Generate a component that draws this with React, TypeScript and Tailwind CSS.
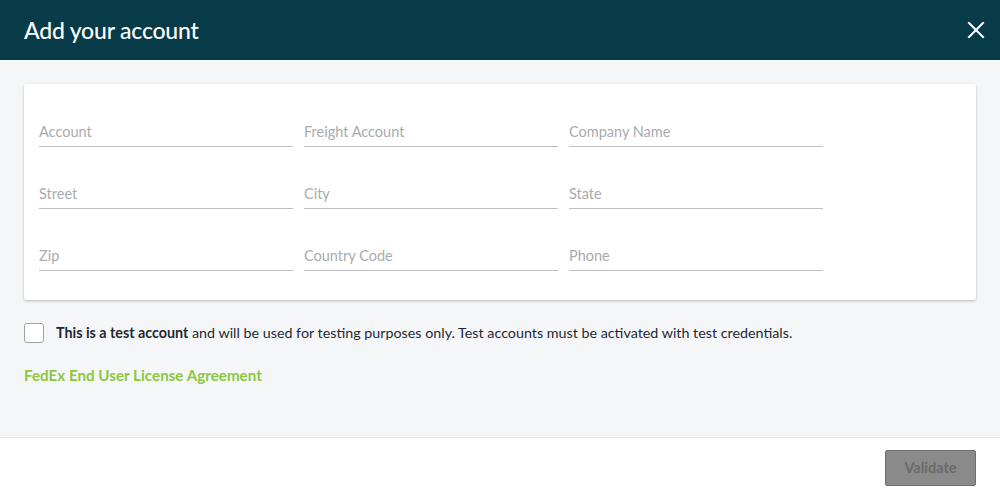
import React from "react";

const fields = [
  ["Account", "Freight Account", "Company Name"],
  ["Street", "City", "State"],
  ["Zip", "Country Code", "Phone"],
];

export default function App() {
  return (
    <div className="w-[1000px] h-[498px] flex flex-col bg-[#f5f6f8]" style={{ fontFamily: "Lato, 'Open Sans', sans-serif" }}>
      <div className="h-[60px] bg-[#083b48] flex items-center justify-between px-6 shrink-0">
        <h1 className="text-white text-[23px] font-medium tracking-[-0.2px]">Add your account</h1>
        <svg width="18" height="18" viewBox="0 0 18 18" className="mr-[-9px] mt-[-1px]">
          <path d="M2 2 L16 16 M16 2 L2 16" stroke="white" strokeWidth="2" strokeLinecap="square" />
        </svg>
      </div>
      <div className="flex-1 px-6 pt-6">
        <div className="bg-white rounded-[3px] shadow-[0_1px_3px_rgba(0,0,0,0.25)] pl-[15px] pt-[13px] pb-[29px] flex flex-col gap-[12px]">
          {fields.map((row, i) => (
            <div key={i} className="flex gap-[11px]">
              {row.map((f) => (
                <div key={f} className="w-[254px] h-[50px] border-b border-[#bdbdbd] flex items-end pb-[3px]">
                  <span className="text-[14.5px] text-[#a9abad]">{f}</span>
                </div>
              ))}
            </div>
          ))}
        </div>
        <div className="flex items-center mt-[22px]">
          <div className="w-[20px] h-[20px] border border-[#a3a3a3] rounded-[3px] bg-white shrink-0" />
          <p className="ml-[12px] text-[14.3px] text-[#1f2933]">
            <span className="font-bold">This is a test account</span> and will be used for testing purposes only. Test accounts must be activated with test credentials.
          </p>
        </div>
        <div className="mt-[21px] text-[15.2px] font-bold text-[#8dc63f]">FedEx End User License Agreement</div>
      </div>
      <div className="h-[61px] bg-white border-t border-[#e6e7e9] flex items-center justify-end px-6 shrink-0">
        <button className="w-[91px] h-[36px] bg-[#8a8a8a] border border-[#6f6f6f] rounded-[2px] text-[14.5px] font-bold text-[#6a6a6a]">Validate</button>
      </div>
    </div>
  );
}
